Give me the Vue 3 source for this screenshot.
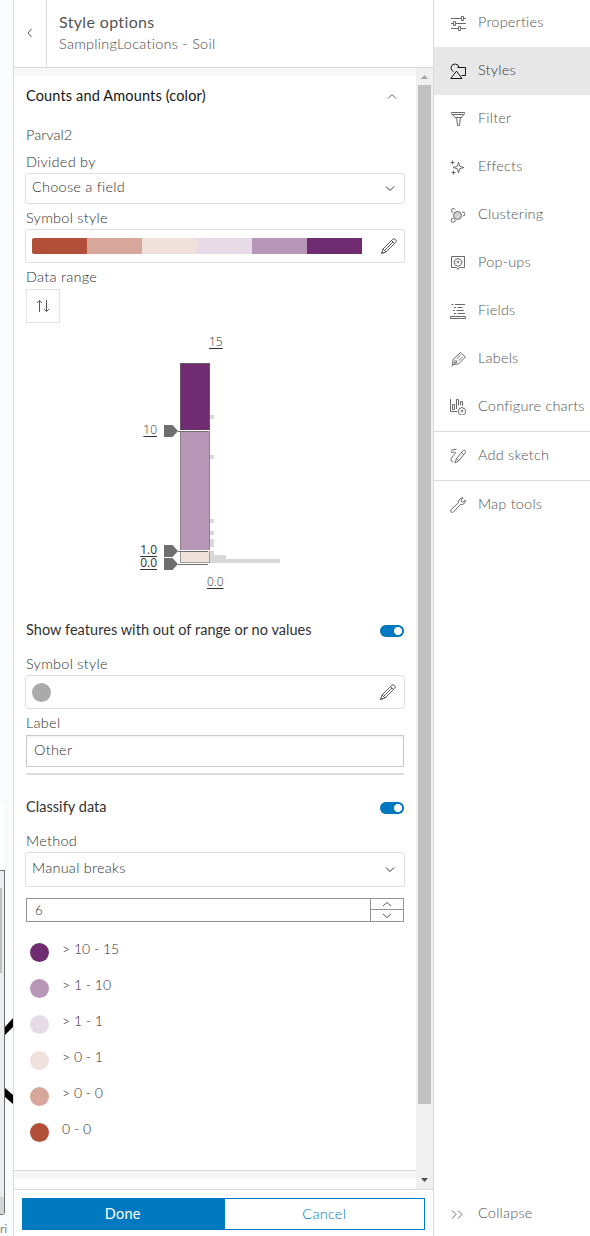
<template>
  <div class="app">
    <div class="map-strip">
      <svg class="roads" width="8" height="90" viewBox="0 0 8 90">
        <path d="M0 9 8 0v9L0 17zM0 70l8 7v9l-8-7z" />
      </svg>
      <div class="map-card"></div>
      <div class="map-popup">
        <div class="popup-thumb"></div>
        <div class="popup-foot"></div>
      </div>
      <span class="attribution">ri</span>
    </div>

    <main class="panel">
      <header class="panel-head">
        <button class="back" aria-label="Back">
          <svg width="8" height="10" viewBox="0 0 8 10"><path d="M5.5 1 2 5l3.500 4" /></svg>
        </button>
        <div class="heading">
          <h1>Style options</h1>
          <p>SamplingLocations - Soil</p>
        </div>
      </header>

      <div class="scroller">
        <div class="content">
          <div class="band"></div>
          <div class="body">
            <div class="section-head">
              <span>Counts and Amounts (color)</span>
              <svg width="10" height="7" viewBox="0 0 10 7"><path d="M1 5.500 5 1.500l4 4" /></svg>
            </div>
            <div class="line parval">Parval2</div>
            <div class="line divided">Divided by</div>
            <div class="box select">
              <span>Choose a field</span>
              <svg width="10" height="7" viewBox="0 0 10 7"><path d="M1 1.500 5 5.500l4-4" /></svg>
            </div>
            <div class="line gap5">Symbol style</div>
            <div class="box symbol">
              <div class="ramp">
                <i v-for="c in ramp" :key="c" :style="{ background: c }"></i>
              </div>
              <svg class="pencil" width="16" height="16" viewBox="0 0 16 16">
                <path :d="pencil" />
              </svg>
            </div>
            <div class="line gap5">Data range</div>
            <button class="flip" aria-label="Invert">
              <svg width="14" height="14" viewBox="0 0 14 14"><path d="M3.500 13V1.500M1 4l2.500-2.500L6 4M10.500 1v11.500M8 10l2.500 2.500L13 10" /></svg>
            </button>

            <div class="chart">
              <svg width="402" height="297" viewBox="14 323 402 297">
                <g fill="#d8d8d8">
                  <rect v-for="b in bins" :key="b[0]" x="210" :y="b[0]" :width="b[1]" :height="b[2]" />
                </g>
                <rect x="180" y="363" width="30" height="67" fill="#6f2c70" />
                <rect x="180" y="431" width="30" height="119" fill="#b896b7" />
                <rect x="180" y="551" width="30" height="12" fill="#f1e2de" />
                <rect x="180.500" y="363.500" width="29" height="199" fill="none" stroke="#6e6e6e" stroke-opacity=".6" />
                <g v-for="s in stops" :key="s.y">
                  <path v-if="s.y < 560" :d="`M180 ${s.y - 0.5}h30`" stroke="#fff" />
                  <path :d="`M178 ${s.y + 0.5}h30`" stroke="#6e6e6e" />
                  <path :d="`M164 ${s.y - 6}h8.500l5.500 6-5.500 6H164z`" fill="#6e6e6e" />
                </g>
              </svg>
              <span class="val max">15</span>
              <span
                v-for="s in stops"
                :key="s.y"
                class="val stop"
                :class="{ dark: s.y > 500 }"
                :style="{ top: s.y - 330 + 'px' }"
              >{{ s.label }}</span>
              <span class="val min">0.0</span>
            </div>

            <div class="row">
              <span>Show features with out of range or no values</span>
              <i class="toggle"></i>
            </div>
            <div class="line gap15">Symbol style</div>
            <div class="box symbol marker">
              <span class="dot other"></span>
              <svg class="pencil" width="16" height="16" viewBox="0 0 16 16">
                <path :d="pencil" />
              </svg>
            </div>
            <div class="line gap5">Label</div>
            <div class="text-input">Other</div>
            <div class="rule"></div>

            <div class="row classify">
              <span>Classify data</span>
              <i class="toggle"></i>
            </div>
            <div class="line gap15">Method</div>
            <div class="box select method">
              <span>Manual breaks</span>
              <svg width="10" height="7" viewBox="0 0 10 7"><path d="M1 1.500 5 5.500l4-4" /></svg>
            </div>
            <div class="number">
              <span>6</span>
              <div class="steps">
                <i><svg width="10" height="6" viewBox="0 0 10 6"><path d="M1 5l4-3.500L9 5" /></svg></i>
                <i><svg width="10" height="6" viewBox="0 0 10 6"><path d="M1 1l4 3.500L9 1" /></svg></i>
              </div>
            </div>
            <ul class="legend">
              <li v-for="item in legend" :key="item.label">
                <span class="dot" :style="{ background: item.color }"></span>
                <span>{{ item.label }}</span>
              </li>
            </ul>
          </div>
          <div class="band end"></div>
        </div>
        <div class="scrollbar">
          <svg width="7" height="4" viewBox="0 0 7 4"><path d="M0 4l3.500-4L7 4z" fill="#a3a3a3" /></svg>
          <div class="thumb"></div>
          <svg class="down" width="7" height="4" viewBox="0 0 7 4"><path d="M0 0l3.500 4L7 0z" fill="#505050" /></svg>
        </div>
      </div>

      <footer class="actions">
        <button class="done">Done</button>
        <button class="cancel">Cancel</button>
      </footer>
    </main>

    <nav class="side">
      <a
        v-for="item in menu"
        :key="item.label"
        :class="{ active: item.active, ruled: item.ruled }"
      >
        <svg width="16" height="16" viewBox="0 0 16 16">
          <path v-if="item.fill" :d="item.fill" class="solid" />
          <path :d="item.icon" />
        </svg>
        <span>{{ item.label }}</span>
      </a>
      <a class="collapse">
        <svg width="16" height="16" viewBox="0 0 16 16"><path d="M2 4.500 6 8.500l-4 4M8 4.500l4 4-4 4" /></svg>
        <span>Collapse</span>
      </a>
    </nav>
  </div>
</template>

<script setup>
const ramp = ['#b14f38', '#d7a79b', '#f0e1dd', '#e7dbe8', '#b896b7', '#6f2c70']

const pencil =
  'M.6 15.400 2 11 11.800 1.200q1.200-1 2.300 0l.7.700q1 1.100 0 2.300L5 14zM2 11l3 3M10.500 2.500l3 3M3.700 12.300l8.300-8.300M.6 15.400l1.800-.5-1.200-1.300'

// y, width, height of each histogram bin
const bins = [
  [415, 4, 4],
  [455, 4, 4],
  [519, 4, 4],
  [531, 4, 4],
  [539, 4, 8],
  [551, 4, 4],
  [555, 16, 4],
  [559, 70, 4]
]

const stops = [
  { y: 431, label: '10' },
  { y: 551, label: '1.0' },
  { y: 564, label: '0.0' }
]

const legend = [
  { label: '> 10 - 15', color: '#6f2c70' },
  { label: '> 1 - 10', color: '#b896b7' },
  { label: '> 1 - 1', color: '#e7dbe8' },
  { label: '> 0 - 1', color: '#f0e1dd' },
  { label: '> 0 - 0', color: '#d7a79b' },
  { label: '0 - 0', color: '#b14f38' }
]

const gear = (x, y) =>
  `M${x - 0.8} ${y - 3.5}h1.600l.4 1 1-.4 1.100 1.100-.4 1 1 .4v1.600l-1 .4.400 1-1.100 1.100-1-.4-.4 1h-1.600l-.4-1-1 .4-1.100-1.100.4-1-1-.4v-1.600l1-.4-.4-1 1.100-1.100 1 .4zM${x - 0.9} ${y}a.9.900 0 1 0 1.800 0 .9.900 0 1 0-1.800 0`

const menu = [
  { label: 'Properties', icon: 'M1 3.500h10M13 3.500h3M11.500 1.500h2v4h-2zM1 8.500h2M5.500 8.500H16M3.500 6.500h2v4h-2zM1 13.500h7M10.500 13.500H16M8.500 11.500h2v4h-2z' },
  { label: 'Styles', active: true, icon: 'M3.500 8.700A4 4 0 1 1 9 4.500M7.500 4.500h8v8h-4M6.500 8.200 12 15.500H.7z' },
  { label: 'Filter', icon: 'M1.500 1.500h13v1.200L10.200 8 9.500 14.500h-2L6.800 8 1.500 2.700zM2.500 3.500h11M5 6.500h6' },
  { label: 'Effects', icon: 'M8.500 3 9.700 7.300l4.300 1.200-4.300 1.200L8.500 14 7.300 9.700 3 8.500l4.300-1.200zM2.500 1.500v4M.5 3.500h4M3.500 11.500v4M1.500 13.500h4' },
  { label: 'Clustering', fill: 'M3.500 8.500a4 4 0 1 0 8 0 4 4 0 1 0-8 0', icon: 'M3.200 5.500a2 2 0 1 1 2-2.800M12 5.200a2 2 0 1 1 1 3.800M5 12.500a2 2 0 1 1-1.500-1.200' },
  { label: 'Pop-ups', icon: 'M1.500 1.500h13v11h-5L8 14.500 6.500 12.500h-5z' + gear(8, 7) },
  { label: 'Fields', icon: 'M1.500 1.500h2M5 1.500h10M4 4.500h2M7.500 4.500h5M3 7.500h2M6.500 7.500H14M4 10.500h2M7.500 10.500H15M.5 13.500h15v2H.5z' },
  { label: 'Labels', icon: 'M2.500 13.500 3 8.500 10.500 1.500 15.500 6 8.500 13zM1.500 15.500 5.500 11M4.500 10.700a1.200 1.200 0 1 0 2.400 0 1.200 1.200 0 1 0-2.400 0M7 7.500l3.500-3.300M9 9.500l3.500-3.500' },
  { label: 'Configure charts', icon: 'M.5 0v12.500H7M2.500 5.500h2v5h-2zM6.500 10V.5h2v6M10.500 6V2.500h2V7' + gear(12, 12) },
  { label: 'Add sketch', ruled: true, icon: 'M5 15l1.500-4.500 6.700-8q1-1 2 0 1 1 0 2.200L8.500 13zM6.500 10.500l2 2M11.500 4.500l2 2M1 3c2-2 3.500-1 5.500-2M1 4.500c1 0 4-1 4.500 0S1 9 1 11.500 3 14.500 3.500 13' },
  { label: 'Map tools', ruled: true, icon: 'M1 12.700 8.600 5.700Q7.900 1.500 13 .7L11 3l.5 1.800 1.800.3L15.400 3Q15.400 8 10.400 7.500L3.500 15q-1.300 1-2.300 0-1-1-.2-2.300' }
]
</script>

<style>
body {
  margin: 0;
  background: #fff;
}
</style>

<style scoped>
.app {
  display: flex;
  width: 590px;
  height: 1236px;
  overflow: hidden;
  font: 300 14.5px/20px Lato, "Open Sans", sans-serif;
  letter-spacing: 0.25px;
  color: #323232;
}
button {
  font: inherit;
  letter-spacing: inherit;
  padding: 0;
}
svg {
  display: block;
  flex: none;
}
svg path {
  stroke-width: 1;
}
.map-strip {
  position: relative;
  width: 13px;
  background: #fbfcfe;
  overflow: hidden;
}
.roads {
  position: absolute;
  left: 5px;
  top: 1018px;
}
.map-card {
  position: absolute;
  left: -10px;
  top: 801px;
  width: 15px;
  height: 69px;
  background: #fff;
  box-shadow: 0 0 6px #0000000c;
}
.map-popup {
  position: absolute;
  left: -10px;
  top: 870px;
  width: 14px;
  height: 343px;
  background: #ecedef;
  border: solid #6e6e6e;
  border-width: 1px 1px 1px 0;
  border-bottom-right-radius: 3px;
}
.popup-thumb {
  margin: 17px 0 0 10px;
  width: 2px;
  height: 85px;
  background: #c1c1c1;
}
.popup-foot {
  margin-top: 224px;
  height: 17px;
  background: #d5d5d5;
}
.attribution {
  position: absolute;
  left: 0;
  top: 1222px;
  font-size: 12px;
  line-height: 14px;
  letter-spacing: 0;
  font-weight: 400;
  color: #858585;
}
.panel {
  display: flex;
  flex-direction: column;
  box-sizing: border-box;
  width: 421px;
  border: solid #dadada;
  border-width: 0 1px;
}
.panel-head {
  display: flex;
  height: 67px;
  border-bottom: 1px solid #dadada;
}
.back {
  display: flex;
  align-items: center;
  justify-content: center;
  width: 33px;
  box-sizing: border-box;
  padding-bottom: 2px;
  background: none;
  border: 0;
  border-right: 1px solid #dadada;
}
.back path,
.section-head path,
.select path,
.steps path,
.pencil path,
.flip path {
  fill: none;
  stroke: #5a5a5a;
}
.heading {
  padding: 12px 0 0 12px;
}
h1 {
  margin: 0;
  font-size: 16px;
  font-weight: 400;
  line-height: 20px;
  letter-spacing: 0.35px;
  color: #555;
}
.heading p {
  margin: 2px 0 0;
  color: #4a4a4a;
}
.scroller {
  display: flex;
  height: 1121px;
}
.content {
  width: 402px;
}
.band {
  height: 8px;
  background: #f7f7f7;
}
.band.end {
  border-top: 1px solid #dadada;
}
.body {
  height: 1094px;
  padding: 0 12px;
}
.section-head {
  display: flex;
  align-items: center;
  justify-content: space-between;
  height: 40px;
  padding-right: 7px;
  font-weight: 400;
  letter-spacing: 0.15px;
  color: #151515;
}
.section-head span {
  margin-top: -1px;
}
.line {
  height: 20px;
  line-height: 18px;
}
.parval {
  margin-top: 10px;
  letter-spacing: 0;
}
.divided {
  margin-top: 7px;
}
.gap5 {
  margin-top: 5px;
}
.gap15 {
  margin-top: 15px;
}
.box {
  display: flex;
  align-items: center;
  justify-content: space-between;
  box-sizing: border-box;
  margin: 0 -1px;
  padding: 0 7px 0 6px;
  border: 1px solid #dfdfdf;
  border-radius: 3px;
}
.select {
  height: 31px;
  padding: 0 9px 0 6px;
}
.select span {
  margin-top: -4px;
}
.select path {
  stroke: #323232;
}
.method {
  height: 35px;
}
.symbol {
  height: 34px;
}
.marker {
  padding-right: 8px;
}
.ramp {
  display: flex;
  width: 330px;
  height: 16px;
  border-radius: 2px 0 0 2px;
  overflow: hidden;
}
.ramp i {
  flex: 1;
}
.flip {
  display: flex;
  align-items: center;
  justify-content: center;
  margin-top: 1px;
  width: 34px;
  height: 34px;
  background: #fff;
  border: 1px solid #e3e3e3;
}
.chart {
  position: relative;
  height: 297px;
  margin: 0 -12px;
}
.val {
  position: absolute;
  height: 12px;
  font: 300 12px/12px "Open Sans", sans-serif;
  letter-spacing: 0;
  color: #323232;
  text-decoration: underline;
  text-underline-offset: 2px;
}
.max {
  left: 195px;
  top: 13px;
}
.min {
  left: 193px;
  top: 253px;
}
.stop {
  right: 259px;
}
.dark {
  font-weight: 400;
}
.row {
  display: flex;
  align-items: center;
  justify-content: space-between;
  height: 20px;
  font-weight: 400;
  letter-spacing: 0.05px;
}
.row span {
  margin-top: -1px;
}
.toggle {
  margin-top: 2px;
  width: 24px;
  height: 12px;
  border-radius: 6px;
  background: radial-gradient(circle at 18px 6px, #fff 3.700px, #0079c1 4.400px);
  box-shadow: inset 0 0 0 1px #00619b33;
}
.dot {
  width: 19px;
  height: 19px;
  border-radius: 50%;
}
.other {
  margin-top: 1px;
  background: #aaa;
}
.text-input {
  box-sizing: border-box;
  height: 32px;
  margin-top: 1px;
  padding: 4px 7px;
  border: 1px solid #cacaca;
  box-shadow: inset 0 1px 2px #00000012;
}
.rule {
  height: 2px;
  margin-top: 6px;
  background: #dcdcdc;
}
.classify {
  margin-top: 22px;
}
.number {
  display: flex;
  justify-content: space-between;
  box-sizing: border-box;
  height: 24px;
  margin-top: 11px;
  border: 1px solid #949494;
}
.number > span {
  padding: 1px 8px;
  font-size: 13px;
}
.steps {
  width: 32px;
  border-left: 1px solid #949494;
}
.steps i {
  display: flex;
  align-items: center;
  justify-content: center;
  height: 11px;
}
.steps i:first-child {
  height: 10px;
  border-bottom: 1px solid #949494;
}
.legend {
  list-style: none;
  margin: 12px 0 0;
  padding: 0 0 0 4px;
  font-size: 14px;
  letter-spacing: 0;
}
.legend li {
  display: flex;
  align-items: center;
  gap: 13px;
  height: 36px;
}
.legend li span:last-child {
  margin-top: -7px;
}
.legend .dot {
  margin-top: 1px;
}
.scrollbar {
  display: flex;
  flex-direction: column;
  align-items: center;
  box-sizing: border-box;
  width: 17px;
  padding: 7px 0 7px;
  background: #f0f0f0;
}
.thumb {
  width: 13px;
  height: 1019px;
  margin-top: 6px;
  background: #c1c1c1;
}
.down {
  margin-top: auto;
}
.actions {
  display: flex;
  padding: 8px 8px 6px;
  height: 32px;
  border-top: 1px solid #dadada;
}
.actions button {
  flex: 1;
  padding-bottom: 1px;
  border: 1px solid #0079c1;
  background: #fff;
  color: #0079c1;
}
.actions .done {
  background: #0079c1;
  color: #fff;
  font-weight: 400;
}
.side {
  display: flex;
  flex-direction: column;
  width: 156px;
  height: 1239px;
  margin-top: -1px;
  letter-spacing: 0.2px;
  color: #555;
}
.side a {
  display: flex;
  align-items: center;
  gap: 12px;
  height: 48px;
  padding-left: 16px;
  white-space: nowrap;
}
.side a span {
  margin-top: -2px;
}
.side a.ruled {
  border-top: 1px solid #dadada;
}
.side a.active {
  background: #e8e8e8;
  color: #323232;
}
.side path {
  fill: none;
  stroke: #6a6a6a;
}
.side .solid {
  fill: #d3d3d3;
}
.side .active path {
  stroke: #151515;
}
.side .collapse {
  margin-top: auto;
}
</style>
